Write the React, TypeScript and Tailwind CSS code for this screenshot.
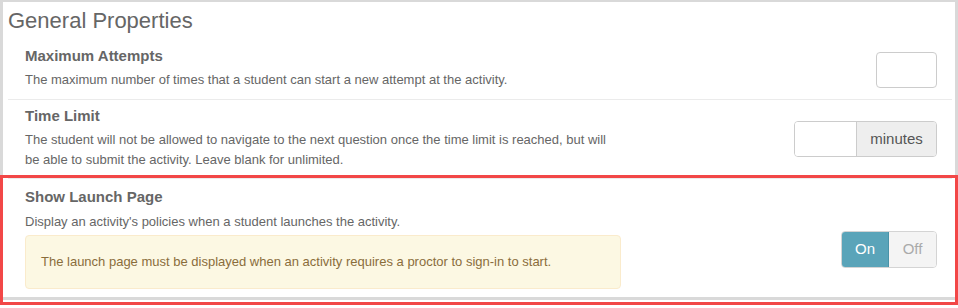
import React from "react";

function Row({
  title,
  children,
  control,
  last,
}: {
  title: string;
  children: React.ReactNode;
  control: React.ReactNode;
  last?: boolean;
}) {
  return (
    <div
      className={`mr-[3px] flex items-center justify-between pl-[17px] pr-[15px] ${
        last ? "" : "border-b border-[#ebebeb]"
      }`}
    >
      <div className={`w-[610px] ${last ? "pt-[8px]" : "pt-[6px]"}`}>
        <div className="text-[15px] font-bold leading-[20px] text-[#666]">{title}</div>
        {children}
      </div>
      {control}
    </div>
  );
}

export default function App() {
  return (
    <div
      className="relative h-[308px] w-[958px] overflow-hidden bg-white"
      style={{ fontFamily: '"Liberation Sans", Arial, sans-serif' }}
    >
      <div className="border-x-[3px] border-t-2 border-b-[3px] border-[#d9d9d9] pl-[5px]">
        <div className="h-[38px] text-[22px] leading-[38px] text-[#666]">General Properties</div>

        {/* Maximum Attempts */}
        <Row
          title="Maximum Attempts"
          control={
            <input
              type="text"
              className="h-[36px] w-[61px] rounded-[4px] border border-[#ccc] bg-white outline-none"
            />
          }
        >
          <p className="mt-1 pb-[9px] text-[13px] leading-[20px] text-[#666]">
            The maximum number of times that a student can start a new attempt at the activity.
          </p>
        </Row>

        {/* Time Limit */}
        <Row
          title="Time Limit"
          control={
            <div className="flex h-[36px] w-[143px] overflow-hidden rounded-[4px] border border-[#ccc]">
              <input type="text" className="w-[61px] bg-white outline-none" />
              <span className="flex flex-1 items-center justify-center border-l border-[#ccc] bg-[#eee] text-[15px] text-[#555]">
                minutes
              </span>
            </div>
          }
        >
          <p className="mt-1 pb-[8px] text-[13px] leading-[20px] text-[#666]">
            The student will not be allowed to navigate to the next question once the time limit is reached, but will
            <br />
            be able to submit the activity. Leave blank for unlimited.
          </p>
        </Row>

        {/* Show Launch Page */}
        <Row
          title="Show Launch Page"
          last
          control={
            <div className="mt-[22px] flex h-[37px] w-[96px] overflow-hidden rounded-[4px] border border-[#d4d4d4] text-[15px]">
              <span className="flex w-[47px] items-center justify-center border-r border-[#4a93a8] bg-[#5aa4b9] text-white">
                On
              </span>
              <span className="flex flex-1 items-center justify-center bg-[#f4f4f4] text-[#aaa]">
                Off
              </span>
            </div>
          }
        >
          <p className="mt-[5px] text-[13px] leading-[20px] text-[#666]">
            Display an activity's policies when a student launches the activity.
          </p>
          <div className="mb-[8px] mt-[3px] flex h-[54px] w-[596px] items-center rounded-[4px] border border-[#faebcc] bg-[#fcf8e3] pl-[15px] text-[13px] text-[#8a6d3b]">
            The launch page must be displayed when an activity requires a proctor to sign-in to start.
          </div>
        </Row>
      </div>

      {/* red highlight annotation */}
      <div className="pointer-events-none absolute left-0 top-[175px] h-[130px] w-[958px] border-[3px] border-[#f24747]" />
    </div>
  );
}
